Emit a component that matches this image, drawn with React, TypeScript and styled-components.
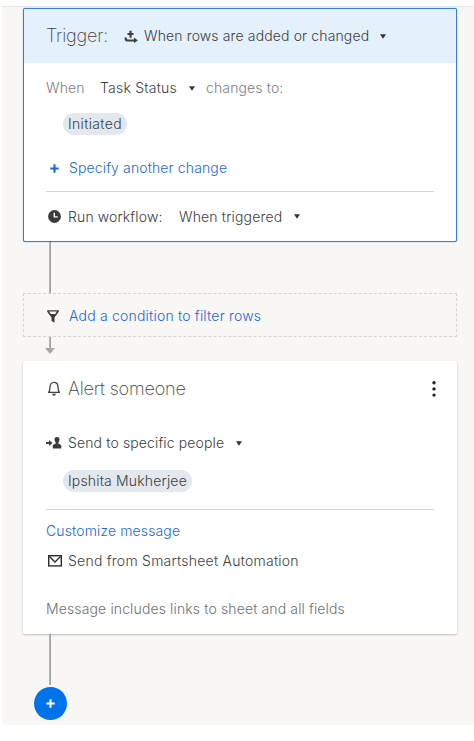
import React from "react";
import styled, { createGlobalStyle } from "styled-components";

const GlobalStyle = createGlobalStyle`
  * {
    box-sizing: border-box;
  }
  body {
    margin: 0;
    background: #fff;
    font-family: Inter, "Liberation Sans", sans-serif;
    font-size: 14px;
    font-weight: 350;
    color: #404040;
  }
  svg {
    display: block;
    flex: none;
  }
`;

const Page = styled.div`
  width: 474px;
  height: 741px;
  padding-top: 6px;
  overflow: hidden;
`;

const Canvas = styled.main`
  height: 719px;
  margin-left: 2px;
  padding: 1px 17px 0 21px;
  border-top: 1px solid #e4e4e4;
  background: #f8f7f6;
  display: flex;
  flex-direction: column;
`;

const Card = styled.section<{ $selected?: boolean; $height: number }>`
  flex: none;
  height: ${(p) => p.$height}px;
  border: ${(p) => (p.$selected ? "1px solid #397dd8" : "0")};
  border-radius: 2px;
  background: #fff;
  box-shadow: ${(p) =>
    p.$selected ? "0 0 1px #397dd8" : "0 1px 2px rgba(0, 0, 0, 0.24)"};
`;

const CardHeader = styled.header`
  height: 54px;
  padding-left: 22px;
  display: flex;
  align-items: center;
  background: #e4f0fc;
`;

const Row = styled.div<{ $height: number; $top?: number; $indent?: number }>`
  height: ${(p) => p.$height}px;
  margin-top: ${(p) => p.$top ?? 0}px;
  padding-left: ${(p) => p.$indent ?? 23}px;
  display: flex;
  align-items: center;
`;

const Divider = styled.hr<{ $top: number; $inset: number }>`
  height: 1px;
  margin: ${(p) => p.$top}px ${(p) => p.$inset}px 0;
  border: 0;
  background: #d5d5d5;
`;

const Title = styled.h2<{ $width: number }>`
  width: ${(p) => p.$width}px;
  margin: 0;
  font-size: 18px;
  font-weight: 250;
  letter-spacing: -0.15px;
  line-height: 24px;
  white-space: nowrap;
`;

const Text = styled.span<{
  $width?: number;
  $color?: string;
  $spacing?: number;
}>`
  width: ${(p) => (p.$width ? `${p.$width}px` : "auto")};
  flex: none;
  color: ${(p) => p.$color ?? "#404040"};
  letter-spacing: ${(p) => p.$spacing ?? 0.13}px;
  line-height: 20px;
  white-space: nowrap;
`;

const Link = styled.a<{ $spacing?: number }>`
  color: #2367dc;
  letter-spacing: ${(p) => p.$spacing ?? 0.13}px;
  line-height: 20px;
  white-space: nowrap;
`;

const Chip = styled.span<{ $spacing: number }>`
  height: 22px;
  padding: 0 5px;
  border-radius: 11px;
  background: #e2e8ee;
  letter-spacing: ${(p) => p.$spacing}px;
  line-height: 22px;
  white-space: nowrap;
`;

const IconSlot = styled.span<{ $width: number }>`
  width: ${(p) => p.$width}px;
  flex: none;
`;

const Connector = styled.div<{ $height: number }>`
  flex: none;
  width: 2px;
  height: ${(p) => p.$height}px;
  margin-left: 26px;
  background: linear-gradient(90deg, #b4b4b4 50%, #a2a2a2 50%);
`;

const ArrowHead = styled.div`
  flex: none;
  width: 10px;
  height: 6px;
  margin: 0 0 7px 22px;
  background: #a8a7a5;
  clip-path: polygon(0 0, 100% 0, 50% 100%);
`;

const ConditionBox = styled.div`
  flex: none;
  height: 44px;
  padding: 2px 0 0 23px;
  border: 1px dashed #d6d5cf;
  display: flex;
  align-items: center;
`;

const MoreButton = styled.button`
  width: 8px;
  height: 20px;
  margin-left: auto;
  margin-right: 19px;
  padding: 0;
  border: 0;
  background: none;
`;

const AddButton = styled.button`
  flex: none;
  width: 33px;
  height: 33px;
  margin: 2px 0 0 11px;
  padding: 0;
  border: 0;
  border-radius: 50%;
  background: #0073ec;
  display: flex;
  align-items: center;
  justify-content: center;
`;

const Caret = () => (
  <svg width="6" height="5" viewBox="0 0 6 5">
    <path d="M0 .3h6L3 4.7z" fill="#333" />
  </svg>
);

const Plus = ({ color }: { color: string }) => (
  <svg width="9" height="9" viewBox="0 0 9 9">
    <path d="M4.5 .3v8.4M.3 4.5h8.4" stroke={color} strokeWidth="2.1" />
  </svg>
);

const RowsChangedIcon = () => (
  <svg width="14" height="14" viewBox="0 0 14 14" fill="none" stroke="#3c3f43">
    <path d="M6.5 1.8v6.9M3.5 5h6" strokeWidth="2.2" />
    <path d="M1.7 8.5v1q0 2 2 2h7.5" strokeWidth="2.2" />
    <path d="M10 8.4l3.9 3-3.900 2.600z" fill="#3c3f43" stroke="none" />
  </svg>
);

const ClockIcon = () => (
  <svg width="13" height="13" viewBox="0 0 13 13">
    <circle cx="6.5" cy="6.5" r="6.4" fill="#3c3c3c" />
    <path d="M6.3 2.8v4.1h3.4" fill="none" stroke="#fff" strokeWidth="1.4" />
  </svg>
);

const FilterIcon = () => (
  <svg width="12" height="13" viewBox="0 0 12 13">
    <path d="M.2 .2h11.6v1.5L7.5 7.4v5.1l-3-1.6V7.4L.2 1.7z" fill="#3c3c3c" />
    <path d="M2.1 1.6h7.8L8.2 4H3.8z" fill="#f8f7f6" />
  </svg>
);

const BellIcon = () => (
  <svg width="14" height="16" viewBox="0 0 14 16">
    <path
      d="M1.5 11.4c1.1-1 1.5-2 1.5-5.3C3 3.1 4.6 1.300 7 1.300s4 1.800 4 4.800c0 3.300.4 4.300 1.500 5.300z"
      fill="none"
      stroke="#444"
      strokeWidth="1.300"
      strokeLinejoin="round"
    />
    <path d="M5 12.700h4q-.3 2-2 2t-2-2z" fill="#444" />
  </svg>
);

const SendToIcon = () => (
  <svg width="16" height="12" viewBox="0 0 16 12" fill="#3c3c3c">
    <path d="M0 4.900h3V2.900L6.500 6 3 9.100V7H0z" />
    <path d="M11 0c1.800 0 2.700 1.100 2.500 2.800-.2 1.400-1.200 2-1.200 3.200 0 1.300 2.700 1.100 3 2.800V11.400H6.800V8.800c.2-1.700 2.900-1.500 2.900-2.800 0-1.200-1-1.800-1.200-3.200C8.300 1.100 9.200 0 11 0z" />
  </svg>
);

const MailIcon = () => (
  <svg width="14" height="12" viewBox="0 0 14 12" fill="none" stroke="#2c2c2c">
    <rect x=".7" y=".7" width="12.600" height="10.200" strokeWidth="1.400" />
    <path d="M1.500 1.500L7 7l5.500-5.500" strokeWidth="1.400" />
  </svg>
);

const App = () => {
  return (
    <Page>
      <GlobalStyle />
      <Canvas>
        <Card $selected $height={234}>
          <CardHeader>
            <Title $width={78}>Trigger:</Title>
            <IconSlot $width={20}>
              <RowsChangedIcon />
            </IconSlot>
            <Text $width={236}>When rows are added or changed</Text>
            <Caret />
          </CardHeader>
          <Row $height={28} $top={11} $indent={22}>
            <Text $width={54} $color="#808080">
              When
            </Text>
            <Text $width={89} $spacing={0.22}>
              Task Status
            </Text>
            <IconSlot $width={17}>
              <Caret />
            </IconSlot>
            <Text $color="#808080">changes to:</Text>
          </Row>
          <Row $height={44} $indent={39}>
            <Chip $spacing={0.33}>Initiated</Chip>
          </Row>
          <Row $height={44} $indent={26}>
            <IconSlot $width={19}>
              <Plus color="#1769df" />
            </IconSlot>
            <Link>Specify another change</Link>
          </Row>
          <Divider $top={1} $inset={22} />
          <Row $height={49} $indent={24}>
            <IconSlot $width={20}>
              <ClockIcon />
            </IconSlot>
            <Text $width={111}>Run workflow:</Text>
            <Text $width={115} $spacing={0.16}>
              When triggered
            </Text>
            <Caret />
          </Row>
        </Card>

        <Connector $height={51} />
        <ConditionBox>
          <IconSlot $width={22}>
            <FilterIcon />
          </IconSlot>
          <Link $spacing={0.2}>Add a condition to filter rows</Link>
        </ConditionBox>
        <Connector $height={11} />
        <ArrowHead />

        <Card $height={273}>
          <Row $height={56} $indent={24}>
            <IconSlot $width={21}>
              <BellIcon />
            </IconSlot>
            <Title $width={130}>Alert someone</Title>
            <MoreButton aria-label="More options">
              <svg width="8" height="20" viewBox="0 0 8 20" fill="#222">
                <circle cx="4" cy="3.700" r="1.700" />
                <circle cx="4" cy="9.900" r="1.700" />
                <circle cx="4" cy="16.100" r="1.700" />
              </svg>
            </MoreButton>
          </Row>
          <Row $height={52}>
            <IconSlot $width={22}>
              <SendToIcon />
            </IconSlot>
            <Text $width={168}>Send to specific people</Text>
            <Caret />
          </Row>
          <Row $height={24} $indent={40}>
            <Chip $spacing={0.17}>Ipshita Mukherjee</Chip>
          </Row>
          <Divider $top={16} $inset={23} />
          <Row $height={42}>
            <Link>Customize message</Link>
          </Row>
          <Row $height={18} $indent={25}>
            <IconSlot $width={20}>
              <MailIcon />
            </IconSlot>
            <Text $spacing={0.24}>Send from Smartsheet Automation</Text>
          </Row>
          <Row $height={26} $top={26}>
            <Text $color="#707070">
              Message includes links to sheet and all fields
            </Text>
          </Row>
        </Card>

        <Connector $height={51} />
        <AddButton aria-label="Add step">
          <Plus color="#fff" />
        </AddButton>
      </Canvas>
    </Page>
  );
};

export default App;
